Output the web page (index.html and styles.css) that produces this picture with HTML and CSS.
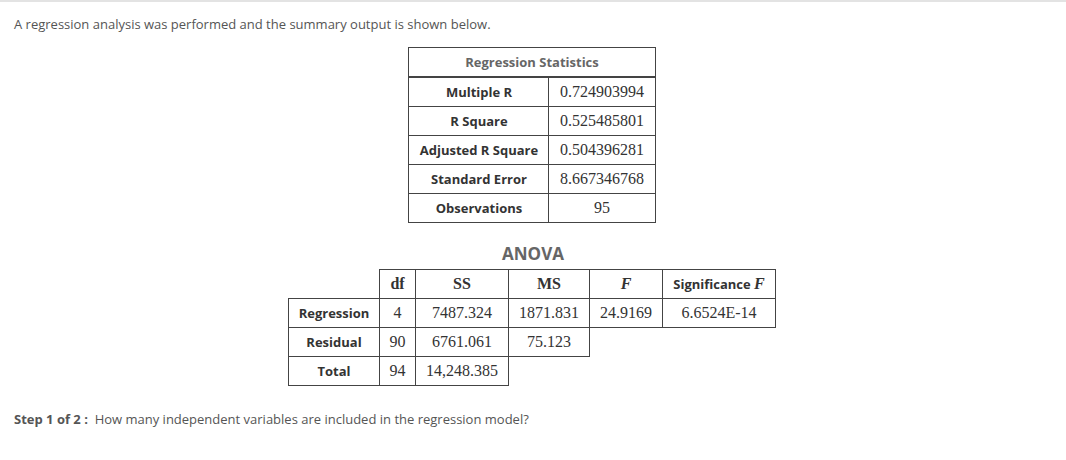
FILE: index.html
```html
<!DOCTYPE html>
<html>
<head>
<meta charset="utf-8">
<link rel="stylesheet" href="styles.css">
</head>
<body>
<div class="topline"></div>
<div class="content">
  <p class="intro">A regression analysis was performed and the summary output is shown below.</p>
  <table class="stats">
    <colgroup><col class="c-lab"><col class="c-val"></colgroup>
    <tr><th colspan="2" class="stats-head">Regression Statistics</th></tr>
    <tr><td class="lab">Multiple R</td><td class="num">0.724903994</td></tr>
    <tr><td class="lab">R Square</td><td class="num">0.525485801</td></tr>
    <tr><td class="lab">Adjusted R Square</td><td class="num">0.504396281</td></tr>
    <tr><td class="lab">Standard Error</td><td class="num">8.667346768</td></tr>
    <tr><td class="lab">Observations</td><td class="num">95</td></tr>
  </table>
  <div class="anova-title">ANOVA</div>
  <table class="anova">
    <colgroup>
      <col class="a-lab"><col class="a-df"><col class="a-ss"><col class="a-ms"><col class="a-f"><col class="a-sig">
    </colgroup>
    <tr>
      <td class="empty"></td>
      <td class="hd">df</td>
      <td class="hd">SS</td>
      <td class="hd">MS</td>
      <td class="hd"><i>F</i></td>
      <td class="hd sig">Significance <i class="serif-f">F</i></td>
    </tr>
    <tr>
      <td class="lab">Regression</td><td class="num">4</td><td class="num">7487.324</td><td class="num">1871.831</td><td class="num">24.9169</td><td class="num">6.6524E-14</td>
    </tr>
    <tr>
      <td class="lab">Residual</td><td class="num">90</td><td class="num">6761.061</td><td class="num">75.123</td><td class="empty"></td><td class="empty"></td>
    </tr>
    <tr>
      <td class="lab">Total</td><td class="num">94</td><td class="num">14,248.385</td><td class="empty"></td><td class="empty"></td><td class="empty"></td>
    </tr>
  </table>
  <p class="step"><b>Step 1 of 2 :</b>&nbsp; How many independent variables are included in the regression model?</p>
</div>
</body>
</html>
```
FILE: styles.css
```css
html, body {
  margin: 0;
  padding: 0;
  background: #fff;
}
body {
  font-family: "Open Sans", "Liberation Sans", sans-serif;
  font-size: 13px;
  color: #555;
}
.topline {
  height: 2px;
  background: #e3e3e3;
}
.content {
  padding: 0 14px;
}
.intro {
  margin: 0;
  padding-top: 13px;
  line-height: 18px;
  height: 32px;
}
table {
  border-collapse: collapse;
  margin: 0 auto;
  table-layout: fixed;
}
td, th {
  padding: 0;
  height: 28px;
  text-align: center;
  vertical-align: middle;
  border: 1px solid #444;
}
.stats {
  width: 246px;
  position: relative;
  left: -1px;
}
.c-lab { width: 140px; }
.c-val { width: 106px; }
.stats-head {
  font-weight: 700;
  font-size: 13px;
  color: #666;
  border-bottom: 2px solid #444;
}
.lab {
  font-weight: 700;
  font-size: 13px;
  color: #333;
}
.num {
  font-family: "Liberation Serif", "Times New Roman", serif;
  font-size: 16px;
  color: #333;
}
.anova-title {
  text-align: center;
  font-weight: 700;
  font-size: 17px;
  color: #666;
  margin-top: 20px;
  line-height: 22px;
  height: 26px;
}
.anova {
  width: 487px;
  position: relative;
  left: -1px;
}
.a-lab { width: 91px; }
.a-df { width: 36px; }
.a-ss { width: 93px; }
.a-ms { width: 81px; }
.a-f { width: 73px; }
.a-sig { width: 113px; }
.empty {
  border: none;
}
.hd {
  font-family: "Liberation Serif", "Times New Roman", serif;
  font-weight: 700;
  font-size: 16px;
  color: #333;
}
.hd.sig {
  font-family: "Open Sans", "Liberation Sans", sans-serif;
  font-size: 13px;
}
.serif-f {
  font-family: "Liberation Serif", "Times New Roman", serif;
  font-size: 16px;
}
.step {
  margin: 0;
  padding-top: 24px;
  line-height: 18px;
}
.step b {
  color: #555;
}
```
